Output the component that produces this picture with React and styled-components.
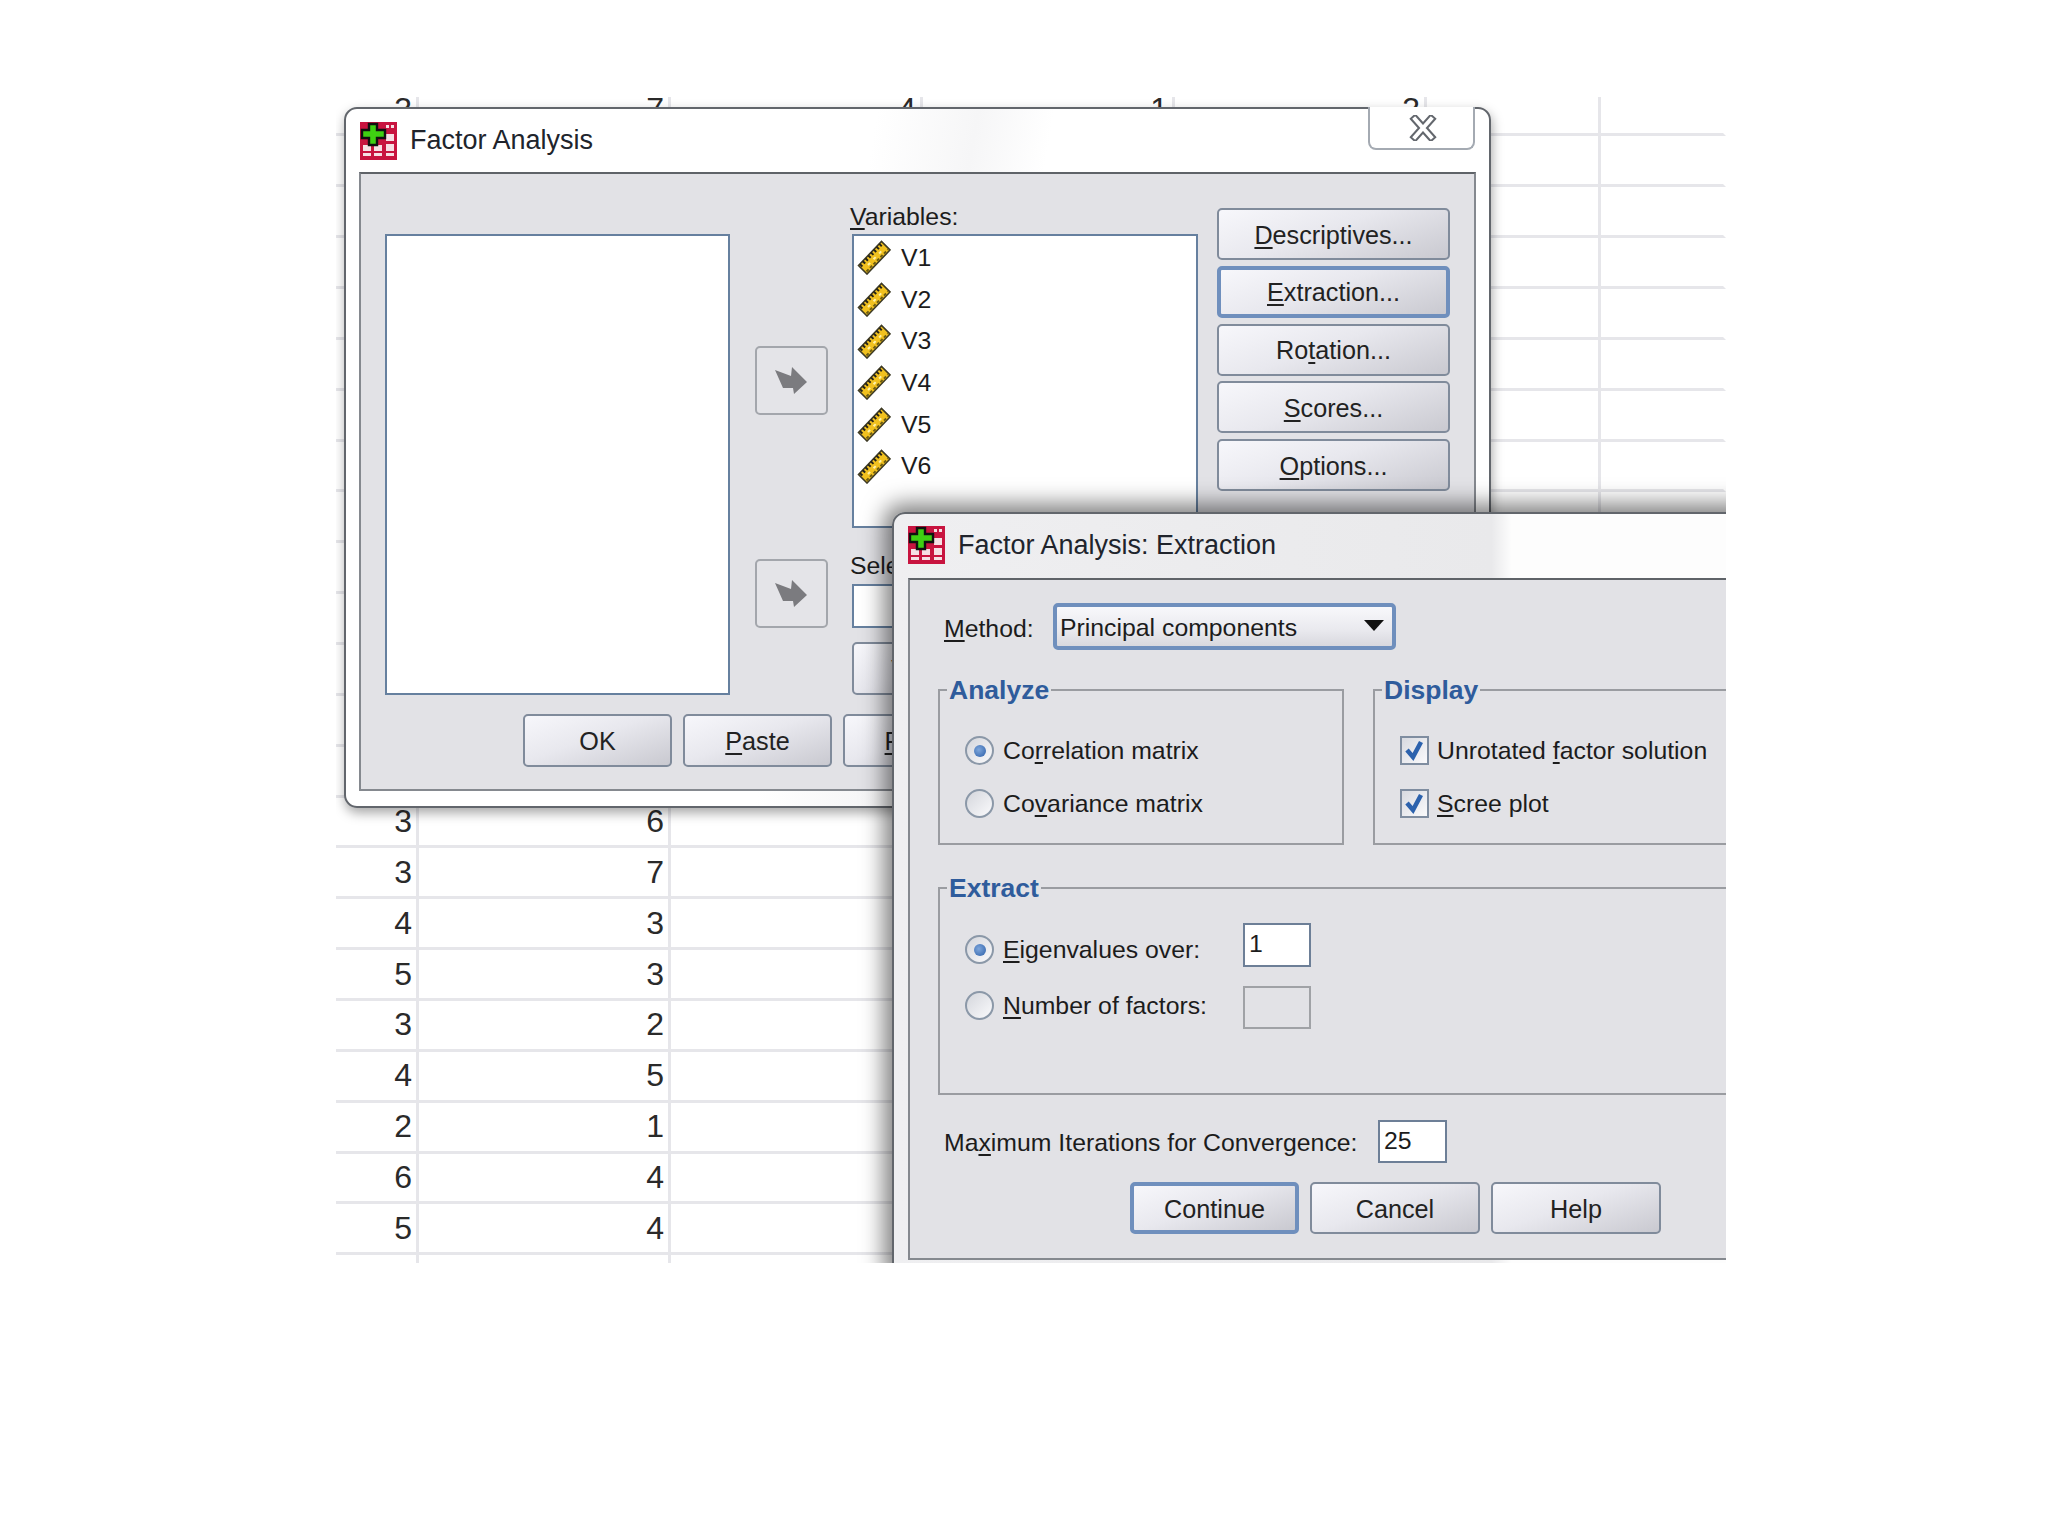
import React from "react";
import styled, { createGlobalStyle } from "styled-components";

const GlobalStyle = createGlobalStyle`
  body {
    margin: 0;
    background: #fff;
    font-family: "Liberation Sans", Arial, sans-serif;
    color: #1c1c1c;
  }
`;

const Desktop = styled.div`
  position: relative;
  width: 1390px;
  height: 1166px;
  margin: 97px 0 0 336px;
  overflow: hidden;
`;

const Sheet = styled.div`
  display: grid;
  grid-template-columns: 83px 252px 252px 252px 252px 174px 125px;
  grid-auto-rows: 50.87px;
  margin-top: -11.5px;
`;

const Cell = styled.div`
  box-sizing: border-box;
  display: flex;
  align-items: center;
  justify-content: flex-end;
  padding-right: 4px;
  border-right: 3px solid ${(p) => (p.$last ? "transparent" : "#e6e6ea")};
  border-bottom: 3px solid #e6e6ea;
  font-size: 32px;
  color: #2a2a2a;
`;

const Window = styled.div`
  position: absolute;
  left: ${(p) => p.$left}px;
  top: ${(p) => p.$top}px;
  width: ${(p) => p.$width}px;
  height: ${(p) => p.$height}px;
  box-sizing: border-box;
  display: flex;
  flex-direction: column;
  border: 2px solid #62666c;
  border-radius: 13px;
  background: ${(p) =>
    p.$tinted
      ? "linear-gradient(90deg, #efeff1 0, #e9e9eb 60%, #fdfdfd 62%)"
      : "linear-gradient(100deg, #fff 42%, #f6f6f7 50%, #fff 56%)"};
  box-shadow: ${(p) =>
    p.$tinted ? "-3px -3px 22px 5px rgba(0, 0, 0, 0.5)" : "1px 5px 12px rgba(0, 0, 0, 0.35)"};
`;

const TitleBar = styled.div`
  flex: none;
  box-sizing: border-box;
  height: ${(p) => p.$height}px;
  padding-bottom: ${(p) => p.$lift || 0}px;
  display: flex;
  align-items: center;
  gap: 13px;
  padding-left: 14px;
  font-size: 27px;
  color: #20242c;
`;

const CloseButton = styled.div`
  position: absolute;
  top: -2px;
  right: 14px;
  width: 107px;
  height: 43px;
  box-sizing: border-box;
  display: flex;
  align-items: center;
  justify-content: center;
  padding-left: 3px;
  background: #fff;
  border: 2px solid #a4aab2;
  border-top: none;
  border-radius: 0 0 8px 8px;
`;

const Panel = styled.div`
  box-sizing: border-box;
  height: ${(p) => p.$height}px;
  margin: 0 ${(p) => p.$right}px 0 ${(p) => p.$leftGap}px;
  background: #e2e2e6;
  border: 2px solid #85898f;
  border-top-color: #5f6368;
`;

const MainPanel = styled(Panel)`
  padding: 34px 0 0 24px;
`;

const MainGrid = styled.div`
  display: grid;
  grid-template-columns: 345px 122px 346px 233px;
  column-gap: 0;
  height: 487px;
`;

const ListBox = styled.div`
  box-sizing: border-box;
  background: #fff;
  border: 2px solid #66809f;
`;

const SourceList = styled(ListBox)`
  height: 461px;
  margin-top: 26px;
`;

const ArrowColumn = styled.div`
  display: flex;
  flex-direction: column;
  align-items: center;
  gap: 144px;
  padding-top: 138px;
`;

const ArrowButton = styled.div`
  box-sizing: border-box;
  width: 73px;
  height: 69px;
  display: flex;
  align-items: center;
  justify-content: center;
  background: #e4e4e8;
  border: 2px solid #a3a6ac;
  border-radius: 5px;
`;

const VariableColumn = styled.div`
  display: flex;
  flex-direction: column;
`;

const Label = styled.div`
  font-size: 24.8px;
  line-height: 26px;
  white-space: nowrap;
  u {
    text-underline-offset: 3px;
  }
`;

const CaptionLabel = styled(Label)`
  margin-left: -2px;
  height: 26px;
  position: relative;
  top: -4px;
`;

const SelectionLabel = styled(CaptionLabel)`
  height: 56px;
  padding-top: 25px;
  box-sizing: border-box;
  top: 0;
`;

const VariableList = styled(ListBox)`
  height: 294px;
  padding-top: 1px;
`;

const VariableRow = styled.div`
  height: 41.7px;
  display: flex;
  align-items: center;
  gap: 10px;
  padding-left: 3px;
  font-size: 24.8px;
`;

const ValueInput = styled(ListBox)`
  height: 44px;
`;

const ValueButtonRow = styled.div`
  margin-top: 14px;
`;

const SideButtons = styled.div`
  display: flex;
  flex-direction: column;
  gap: 5.8px;
  margin-left: 19px;
  width: 233px;
`;

const PushButton = styled.div`
  box-sizing: border-box;
  flex: none;
  width: ${(p) => p.$width}px;
  height: ${(p) => p.$height}px;
  display: flex;
  align-items: center;
  justify-content: center;
  padding-top: 2px;
  font-size: 25.2px;
  color: #222;
  border-radius: 5px;
  border: ${(p) => (p.$focused ? "4px solid #6f8fbd" : "2px solid #808b9b")};
  background: linear-gradient(160deg, #f7f7fb 0%, #e8e8ee 45%, #c9c9d0 100%);
  u {
    text-underline-offset: 3px;
  }
`;

const BottomButtons = styled.div`
  display: flex;
  gap: ${(p) => p.$gap}px;
  margin-top: ${(p) => p.$top}px;
  margin-left: ${(p) => p.$left}px;
`;

const ExtractionPanel = styled(Panel)`
  padding: 23px 0 0 28px;
`;

const MethodRow = styled.div`
  display: flex;
  align-items: center;
  height: 47px;
  padding-left: 6px;
`;

const MethodLabel = styled(Label)`
  width: 109px;
  padding-top: 4px;
`;

const Dropdown = styled.div`
  box-sizing: border-box;
  width: 343px;
  height: 47px;
  display: flex;
  align-items: center;
  justify-content: space-between;
  padding: 6px 8px 3px 3px;
  font-size: 24.8px;
  border: 4px solid #6f8fbd;
  border-radius: 5px;
  background: linear-gradient(180deg, #f8f8fb 0%, #e9e9ee 60%, #d8d8de 100%);
`;

const Caret = styled.span`
  width: 0;
  height: 0;
  border-left: 10px solid transparent;
  border-right: 10px solid transparent;
  border-top: 11px solid #111;
  margin-bottom: 6px;
`;

const GroupRow = styled.div`
  display: flex;
  gap: 29px;
  margin-top: ${(p) => p.$top}px;
`;

const Group = styled.fieldset`
  box-sizing: border-box;
  flex: none;
  margin: 0;
  width: ${(p) => p.$width}px;
  height: ${(p) => p.$height}px;
  padding: 31px 0 0 25px;
  border: 2px solid #9a9ca1;
  min-width: 0;
`;

const Legend = styled.legend`
  margin-left: -18px;
  padding: 0 2px;
  font-size: 26.5px;
  line-height: 30px;
  font-weight: 700;
  color: #2f5c9c;
`;

const OptionList = styled.div`
  display: flex;
  flex-direction: column;
  gap: 24px;
`;

const Option = styled.div`
  display: flex;
  align-items: center;
  gap: ${(p) => p.$gap}px;
  height: 29px;
`;

const Radio = styled.span`
  box-sizing: border-box;
  flex: none;
  width: 29px;
  height: 29px;
  display: flex;
  align-items: center;
  justify-content: center;
  border: 2px solid #8b98a8;
  border-radius: 50%;
  background: linear-gradient(135deg, #d4d6dc, #fafafc);
  &::after {
    content: "";
    display: ${(p) => (p.$on ? "block" : "none")};
    width: 12px;
    height: 12px;
    border-radius: 50%;
    background: radial-gradient(circle at 40% 40%, #7fa7dc, #2c5fa8);
  }
`;

const CheckBox = styled.span`
  box-sizing: border-box;
  flex: none;
  width: 29px;
  height: 29px;
  display: flex;
  align-items: center;
  justify-content: center;
  border: 2px solid #7f8da0;
  background: linear-gradient(135deg, #d8dae0, #fafafc);
`;

const ExtractRows = styled.div`
  display: flex;
  flex-direction: column;
  gap: 19px;
  margin-top: -11px;
`;

const ExtractRow = styled.div`
  display: flex;
  align-items: flex-start;
  height: ${(p) => p.$height}px;
`;

const ExtractOption = styled(Option)`
  width: 278px;
  margin-top: ${(p) => p.$top}px;
`;

const NumberBox = styled.div`
  box-sizing: border-box;
  flex: none;
  width: ${(p) => p.$width}px;
  height: ${(p) => p.$height}px;
  padding: 3px 0 0 4px;
  font-size: 24.8px;
  line-height: 32px;
  background: ${(p) => (p.$disabled ? "#e2e2e6" : "#fff")};
  border: 2px solid ${(p) => (p.$disabled ? "#a0a2a6" : "#6d7f97")};
`;

const IterationRow = styled.div`
  display: flex;
  align-items: center;
  margin-top: 25px;
  padding-left: 6px;
  height: 43px;
`;

const IterationLabel = styled(Label)`
  width: 434px;
  padding-top: 3px;
`;

const AppIcon = () => (
  <svg width="37" height="38" viewBox="0 0 37 38">
    <rect width="37" height="38" fill="#c8143f" />
    <g fill="#f6dfe4">
      <rect x="26" y="3" width="3" height="3" />
      <rect x="31" y="3" width="3" height="3" />
      <rect x="26" y="12" width="8" height="7" />
      <rect x="3" y="23" width="8" height="6" />
      <rect x="14" y="23" width="8" height="6" />
      <rect x="26" y="22" width="8" height="7" />
      <rect x="3" y="31" width="8" height="3" />
      <rect x="14" y="31" width="8" height="3" />
      <rect x="26" y="31" width="8" height="3" />
    </g>
    <path
      d="M9 2h8v6h8v8h-8v7H9v-7H2V8h7z"
      fill="#3fd012"
      stroke="#101010"
      strokeWidth="2.4"
    />
  </svg>
);

const RulerIcon = () => (
  <svg width="34" height="35" viewBox="0 0 34 35">
    <path d="M1.5 25.5 24.5 1.5 33 10 10 34z" fill="#f1c11f" stroke="#3d3a24" strokeWidth="1.6" />
    <path d="M3.5 26 25 3.5" stroke="#26241a" strokeWidth="3.4" strokeDasharray="2 2" />
    <path d="M11 25 26 9.5" stroke="#fff2a8" strokeWidth="2" strokeDasharray="3 5" />
    <path d="M9.5 31.5 31 9.5" stroke="#6e5d12" strokeWidth="2" strokeDasharray="3 2" />
  </svg>
);

const MoveArrow = () => (
  <svg width="33" height="28" viewBox="0 0 33 28">
    <path d="M0 3 16 9 17 0 32 15 19 27 18 21 8 21z" fill="#7b7b7f" />
  </svg>
);

const CloseGlyph = () => (
  <svg width="28" height="26" viewBox="0 0 28 26">
    <path d="M6 4 22 22M22 4 6 22" stroke="#63676d" strokeWidth="8" strokeLinecap="square" />
    <path d="M6 4 22 22M22 4 6 22" stroke="#fff" strokeWidth="4" strokeLinecap="square" />
  </svg>
);

const CheckMark = () => (
  <svg width="19" height="21" viewBox="0 0 19 21">
    <path d="M2 10 8 17 16 2" fill="none" stroke="#2c62ad" strokeWidth="4.5" />
  </svg>
);

const sheetRows = {
  0: [3, 7, 4, 1, 3],
  14: [3, 6],
  15: [3, 7],
  16: [4, 3],
  17: [5, 3],
  18: [3, 2],
  19: [4, 5],
  20: [2, 1],
  21: [6, 4],
  22: [5, 4],
};

const variables = ["V1", "V2", "V3", "V4", "V5", "V6"];

const sideButtons = [
  { key: "d", label: <><u>D</u>escriptives...</> },
  { key: "e", label: <><u>E</u>xtraction...</>, focused: true },
  { key: "r", label: <>Ro<u>t</u>ation...</> },
  { key: "s", label: <><u>S</u>cores...</> },
  { key: "o", label: <><u>O</u>ptions...</> },
];

const App = () => {
  const cells = [];
  for (let row = 0; row < 24; row++) {
    for (let col = 0; col < 7; col++) {
      cells.push(
        <Cell key={row + "-" + col} $last={col === 6}>
          {sheetRows[row] ? sheetRows[row][col] : ""}
        </Cell>
      );
    }
  }

  return (
    <>
      <GlobalStyle />
      <Desktop>
        <Sheet>{cells}</Sheet>

        <Window $left={8} $top={10} $width={1147} $height={701}>
          <TitleBar $height={63}>
            <AppIcon />
            Factor Analysis
          </TitleBar>
          <CloseButton>
            <CloseGlyph />
          </CloseButton>
          <MainPanel $height={619} $leftGap={13} $right={13}>
            <MainGrid>
              <SourceList />
              <ArrowColumn>
                <ArrowButton>
                  <MoveArrow />
                </ArrowButton>
                <ArrowButton>
                  <MoveArrow />
                </ArrowButton>
              </ArrowColumn>
              <VariableColumn>
                <CaptionLabel>
                  <u>V</u>ariables:
                </CaptionLabel>
                <VariableList>
                  {variables.map((name) => (
                    <VariableRow key={name}>
                      <RulerIcon />
                      {name}
                    </VariableRow>
                  ))}
                </VariableList>
                <SelectionLabel>Selection Variable:</SelectionLabel>
                <ValueInput />
                <ValueButtonRow>
                  <PushButton $width={162} $height={53}>
                    Value...
                  </PushButton>
                </ValueButtonRow>
              </VariableColumn>
              <SideButtons>
                {sideButtons.map((b) => (
                  <PushButton key={b.key} $width={233} $height={52} $focused={b.focused}>
                    <span>{b.label}</span>
                  </PushButton>
                ))}
              </SideButtons>
            </MainGrid>
            <BottomButtons $gap={11} $top={19} $left={138}>
              <PushButton $width={149} $height={53}>OK</PushButton>
              <PushButton $width={149} $height={53}>
                <span><u>P</u>aste</span>
              </PushButton>
              <PushButton $width={149} $height={53}>
                <span><u>R</u>eset</span>
              </PushButton>
            </BottomButtons>
          </MainPanel>
        </Window>

        <Window $left={556} $top={415} $width={1000} $height={770} $tinted>
          <TitleBar $height={64} $lift={2}>
            <AppIcon />
            Factor Analysis: Extraction
          </TitleBar>
          <ExtractionPanel $height={682} $leftGap={14} $right={13}>
            <MethodRow>
              <MethodLabel>
                <u>M</u>ethod:
              </MethodLabel>
              <Dropdown>
                Principal components
                <Caret />
              </Dropdown>
            </MethodRow>

            <GroupRow $top={25}>
              <Group $width={406} $height={170}>
                <Legend>Analyze</Legend>
                <OptionList>
                  <Option $gap={9}>
                    <Radio $on />
                    <Label>Co<u>r</u>relation matrix</Label>
                  </Option>
                  <Option $gap={9}>
                    <Radio />
                    <Label>Co<u>v</u>ariance matrix</Label>
                  </Option>
                </OptionList>
              </Group>
              <Group $width={500} $height={170}>
                <Legend>Display</Legend>
                <OptionList>
                  <Option $gap={8}>
                    <CheckBox><CheckMark /></CheckBox>
                    <Label>Unrotated <u>f</u>actor solution</Label>
                  </Option>
                  <Option $gap={8}>
                    <CheckBox><CheckMark /></CheckBox>
                    <Label><u>S</u>cree plot</Label>
                  </Option>
                </OptionList>
              </Group>
            </GroupRow>

            <GroupRow $top={28}>
              <Group $width={935} $height={222}>
                <Legend>Extract</Legend>
                <ExtractRows>
                  <ExtractRow $height={44}>
                    <ExtractOption $gap={9} $top={12}>
                      <Radio $on />
                      <Label><u>E</u>igenvalues over:</Label>
                    </ExtractOption>
                    <NumberBox $width={68} $height={44}>1</NumberBox>
                  </ExtractRow>
                  <ExtractRow $height={43}>
                    <ExtractOption $gap={9} $top={5}>
                      <Radio />
                      <Label><u>N</u>umber of factors:</Label>
                    </ExtractOption>
                    <NumberBox $width={68} $height={43} $disabled />
                  </ExtractRow>
                </ExtractRows>
              </Group>
            </GroupRow>

            <IterationRow>
              <IterationLabel>
                Ma<u>x</u>imum Iterations for Convergence:
              </IterationLabel>
              <NumberBox $width={69} $height={43}>25</NumberBox>
            </IterationRow>

            <BottomButtons $gap={11} $top={19} $left={192}>
              <PushButton $width={169} $height={52} $focused>Continue</PushButton>
              <PushButton $width={170} $height={52}>Cancel</PushButton>
              <PushButton $width={170} $height={52}>Help</PushButton>
            </BottomButtons>
          </ExtractionPanel>
        </Window>
      </Desktop>
    </>
  );
};

export default App;
